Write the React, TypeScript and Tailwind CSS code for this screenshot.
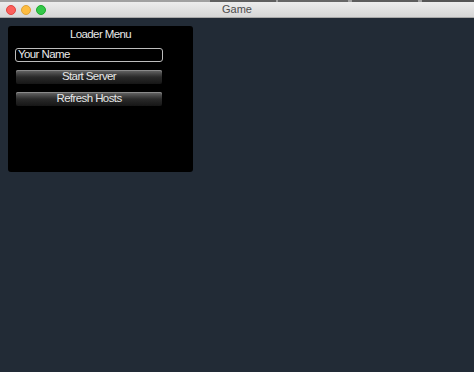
export default function App() {
  const font = { fontFamily: '"Liberation Sans", Arial, sans-serif' }

  return (
    <div className="flex h-[372px] w-[474px] flex-col overflow-hidden bg-[#222b36]" style={font}>
      {/* desktop strip behind the window */}
      <div className="flex h-[2px] bg-[#a0a0a0]">
        <div className="w-[210px]" />
        <div className="w-[66px] bg-[#5f5f5f]" />
        <div className="w-[2px]" />
        <div className="w-[70px] bg-[#666666]" />
        <div className="w-[4px]" />
        <div className="w-[66px] bg-[#5c5c5c]" />
        <div className="w-[4px]" />
        <div className="flex-1 bg-[#555555]" />
      </div>

      {/* title bar */}
      <div className="relative flex h-[16px] items-center border-b border-[#a8a8a8] bg-gradient-to-b from-[#ececec] to-[#d6d6d6]">
        <div className="flex items-center gap-[5px] pl-[6px]">
          <span className="h-[10px] w-[10px] rounded-full border border-[#e0443e] bg-[#fc605c]" />
          <span className="h-[10px] w-[10px] rounded-full border border-[#dea236] bg-[#fdbc40]" />
          <span className="h-[10px] w-[10px] rounded-full border border-[#1aab29] bg-[#34c84a]" />
        </div>
        <div className="absolute inset-0 flex items-center justify-center text-[11px] text-[#4d4d4d]">
          Game
        </div>
      </div>

      {/* content */}
      <div className="px-[8px] pt-[8px]">
        <div className="flex h-[146px] w-[185px] flex-col rounded-[3px] bg-black px-[7px] text-[11.5px] tracking-[-0.6px] text-[#e8e8e8]">
          <div className="pt-[1px] text-center leading-[14px]">Loader Menu</div>

          <div className="mt-[7px] flex h-[14px] w-[148px] items-center rounded-[3px] border border-[#bdbdbd] px-[2px] leading-none">
            Your Name
          </div>

          <button className="mt-[8px] ml-[1px] flex h-[14px] w-[146px] items-center justify-center rounded-[2px] bg-gradient-to-b from-[#6a6a6a] via-[#2a2a2a] to-[#161616] leading-none shadow-[inset_0_1px_0_#8a8a8a]">
            Start Server
          </button>

          <button className="mt-[8px] ml-[1px] flex h-[14px] w-[146px] items-center justify-center rounded-[2px] bg-gradient-to-b from-[#6a6a6a] via-[#2a2a2a] to-[#161616] leading-none shadow-[inset_0_1px_0_#8a8a8a]">
            Refresh Hosts
          </button>
        </div>
      </div>
    </div>
  )
}
